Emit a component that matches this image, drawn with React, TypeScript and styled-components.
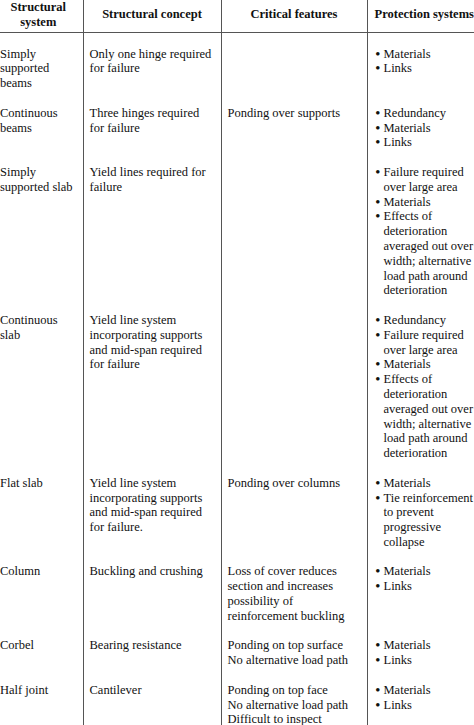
import React from "react";
import styled, { createGlobalStyle } from "styled-components";

const Global = createGlobalStyle`
  html, body {
    margin: 0;
    padding: 0;
    background: #ffffff;
    overflow: hidden;
  }
  body {
    width: 474px;
    height: 725px;
  }
`;

const Page = styled.div`
  width: 474px;
  height: 725px;
  overflow: hidden;
  background: #fff;
`;

const Table = styled.table`
  margin-left: -6px;
  margin-top: 0;
  width: 487px;
  border-collapse: collapse;
  table-layout: fixed;
  font-family: "Liberation Serif", "Times New Roman", serif;
  font-size: 12.5px;
  line-height: 14.8px;
  color: #111;
`;

const HeadCell = styled.th<{ $divider?: boolean }>`
  font-weight: bold;
  text-align: center;
  vertical-align: middle;
  padding: 0 0 2px;
  height: 29px;
  border-bottom: 1px solid #555;
  border-left: ${(p) => (p.$divider ? "1px solid #555" : "none")};
  white-space: nowrap;
`;

const Cell = styled.td<{ $divider?: boolean }>`
  vertical-align: top;
  padding: 14px 2px 0.8px 6px;
  border-left: ${(p) => (p.$divider ? "1px solid #555" : "none")};
  white-space: nowrap;
`;

const BulletList = styled.ul`
  list-style: none;
  margin: 0;
  padding: 0 0 0 2px;
`;

const BulletItem = styled.li`
  display: grid;
  grid-template-columns: 8px auto;
`;

const Dot = styled.span`
  font-size: 13px;
  font-weight: bold;
`;

type Row = {
  system: string;
  concept: string;
  features: string;
  protection: string[];
};

const rows: Row[] = [
  {
    system: "Simply\nsupported\nbeams",
    concept: "Only one hinge required\nfor failure",
    features: "",
    protection: ["Materials", "Links"],
  },
  {
    system: "Continuous\nbeams",
    concept: "Three hinges required\nfor failure",
    features: "Ponding over supports",
    protection: ["Redundancy", "Materials", "Links"],
  },
  {
    system: "Simply\nsupported slab",
    concept: "Yield lines required for\nfailure",
    features: "",
    protection: [
      "Failure required\nover large area",
      "Materials",
      "Effects of\ndeterioration\naveraged out over\nwidth; alternative\nload path around\ndeterioration",
    ],
  },
  {
    system: "Continuous\nslab",
    concept: "Yield line system\nincorporating supports\nand mid-span required\nfor failure",
    features: "",
    protection: [
      "Redundancy",
      "Failure required\nover large area",
      "Materials",
      "Effects of\ndeterioration\naveraged out over\nwidth; alternative\nload path around\ndeterioration",
    ],
  },
  {
    system: "Flat slab",
    concept: "Yield line system\nincorporating supports\nand mid-span required\nfor failure.",
    features: "Ponding over columns",
    protection: ["Materials", "Tie reinforcement\nto prevent\nprogressive\ncollapse"],
  },
  {
    system: "Column",
    concept: "Buckling and crushing",
    features: "Loss of cover reduces\nsection and increases\npossibility of\nreinforcement buckling",
    protection: ["Materials", "Links"],
  },
  {
    system: "Corbel",
    concept: "Bearing resistance",
    features: "Ponding on top surface\nNo alternative load path",
    protection: ["Materials", "Links"],
  },
  {
    system: "Half joint",
    concept: "Cantilever",
    features: "Ponding on top face\nNo alternative load path\nDifficult to inspect",
    protection: ["Materials", "Links"],
  },
];

const Lines: React.FC<{ text: string }> = ({ text }) => (
  <>
    {text.split("\n").map((line, i, arr) => (
      <React.Fragment key={i}>
        {line}
        {i < arr.length - 1 && <br />}
      </React.Fragment>
    ))}
  </>
);

export default function App() {
  return (
    <Page>
      <Global />
      <Table>
        <colgroup>
          <col style={{ width: 89 }} />
          <col style={{ width: 138 }} />
          <col style={{ width: 146 }} />
          <col style={{ width: 114 }} />
        </colgroup>
        <thead>
          <tr>
            <HeadCell>
              Structural
              <br />
              system
            </HeadCell>
            <HeadCell $divider>Structural concept</HeadCell>
            <HeadCell $divider>Critical features</HeadCell>
            <HeadCell $divider>Protection systems</HeadCell>
          </tr>
        </thead>
        <tbody>
          {rows.map((r, i) => (
            <tr key={i}>
              <Cell>
                <Lines text={r.system} />
              </Cell>
              <Cell $divider>
                <Lines text={r.concept} />
              </Cell>
              <Cell $divider>
                <Lines text={r.features} />
              </Cell>
              <Cell $divider>
                <BulletList>
                  {r.protection.map((p, j) => (
                    <BulletItem key={j}>
                      <Dot>•</Dot>
                      <span>
                        <Lines text={p} />
                      </span>
                    </BulletItem>
                  ))}
                </BulletList>
              </Cell>
            </tr>
          ))}
        </tbody>
      </Table>
    </Page>
  );
}
